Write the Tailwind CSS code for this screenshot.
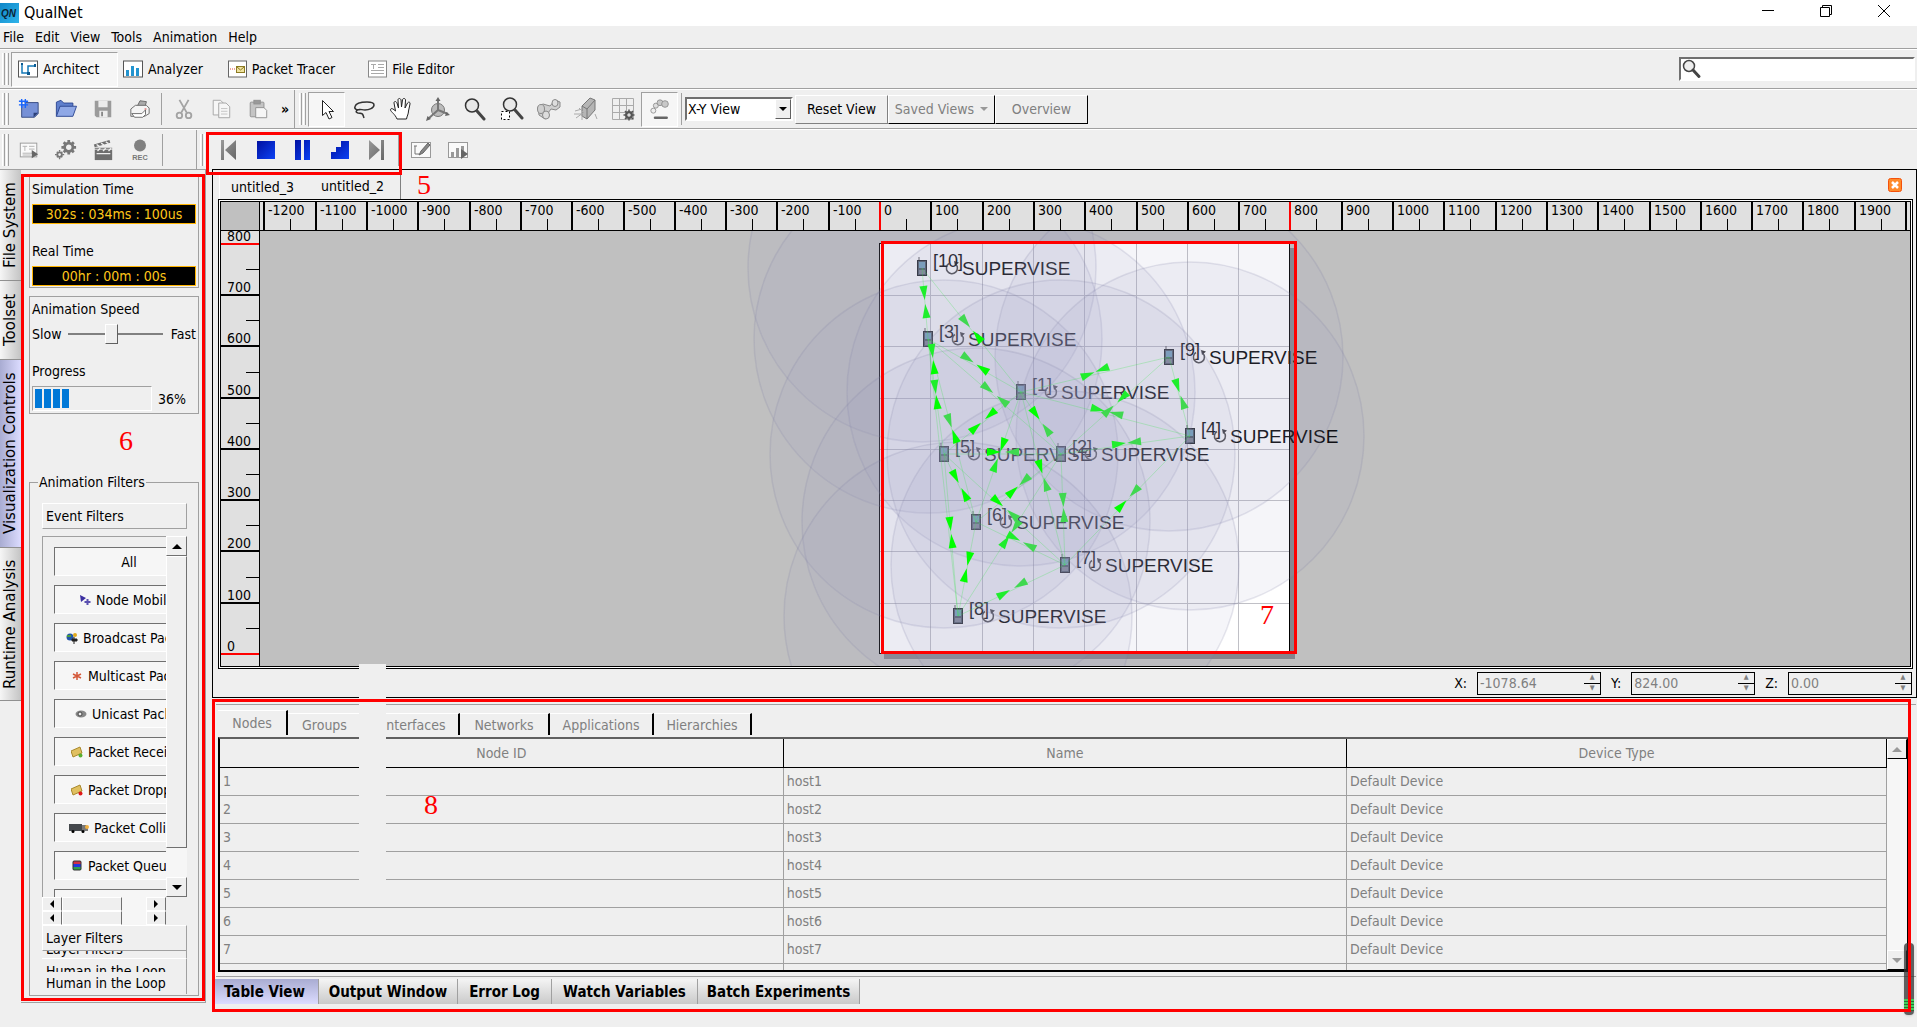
<!DOCTYPE html>
<html lang="en">
<head>
<meta charset="utf-8">
<title>QualNet</title>
<script src="https://cdn.jsdelivr.net/npm/@tailwindcss/browser@4"></script>
</head>
<body class="min-h-screen overflow-x-hidden bg-[#efefef] font-['DejaVu_Sans_Condensed','Noto_Sans',sans-serif] text-[14px] leading-5 text-black">

<!-- title bar -->
<header class="flex h-[26px] items-center bg-white">
  <svg class="h-5 w-[19px]" viewBox="0 0 19 20"><defs><linearGradient id="qn" x1="0" y1="0" x2="1" y2="1"><stop offset="0" stop-color="#0f86c8"/><stop offset="1" stop-color="#2fb4ea"/></linearGradient></defs><rect width="19" height="20" fill="url(#qn)"/><text x="1" y="14" font-size="10" font-weight="700" font-style="italic" font-family="Liberation Sans" fill="#0b2436">QN</text></svg>
  <h1 class="ml-[5px] text-[16px]">QualNet</h1>
  <div class="ml-auto flex gap-11 pr-[26px] pb-1">
    <button aria-label="Minimize"><svg class="h-3.5 w-3.5" viewBox="0 0 14 14" fill="none" stroke="#000"><path d="M1 6.500h12"/></svg></button>
    <button aria-label="Restore"><svg class="h-3.5 w-3.5" viewBox="0 0 14 14" fill="none" stroke="#000"><path d="M1.500 3.500h9v9h-9zM3.500 3V1.500h9v9H11"/></svg></button>
    <button aria-label="Close"><svg class="h-3.5 w-3.5" viewBox="0 0 14 14" fill="none" stroke="#000"><path d="M1 1l12 12M13 1L1 13"/></svg></button>
  </div>
</header>

<nav class="flex h-[23px] items-center gap-[11px] border-b border-[#a0a0a0] px-[3px]">
  <a href="#">File</a><a href="#">Edit</a><a href="#">View</a><a href="#">Tools</a><a href="#">Animation</a><a href="#">Help</a>
</nav>

<!-- perspectives -->
<div class="flex h-10 items-center border-t border-b border-t-white border-b-[#a0a0a0]">
  <div class="ml-0.5 flex h-8 gap-px"><i class="w-[3px] border-r border-l border-l-white border-r-[#a0a0a0]"></i><i class="w-[3px] border-r border-l border-l-white border-r-[#a0a0a0]"></i></div>
  <button class="ml-0.5 flex h-[35px] w-[107px] items-center gap-[5px] border border-[#a0a0a0] border-r-white border-b-white bg-[#f6f6f6] pl-1.5">
    <svg class="h-[18px] w-5" viewBox="0 0 20 18" fill="none"><rect x=".5" y="1" width="19" height="16" fill="#fff" stroke="#555"/><path d="M4 4v9h6V6h7" stroke="#1479b8" stroke-width="1.500"/><path d="M3 3h2v2H3zM9 12h3v3H9zM16 4h2v3h-2z" fill="#0b5a92"/></svg>Architect</button>
  <button class="ml-[5px] flex items-center gap-[5px]">
    <svg class="h-[18px] w-5" viewBox="0 0 20 18"><rect x=".5" y="1" width="19" height="16" fill="#fff" stroke="#555"/><path d="M3 10h3v6H3zM8 6h3v10H8zM13 8h3v8h-3z" fill="#2394cf"/></svg>Analyzer</button>
  <button class="ml-[25px] flex items-center gap-[5px]">
    <svg class="h-[18px] w-[19px]" viewBox="0 0 19 18"><rect x=".5" y="1" width="18" height="16" fill="#fff" stroke="#666"/><path d="M2 9h6" stroke="#e0483a" stroke-dasharray="1 1"/><rect x="8.500" y="6.500" width="8" height="6" fill="#efe3a0" stroke="#8c7a22"/><path d="M9 7l3.500 3L16 7" fill="none" stroke="#8c7a22"/></svg>Packet Tracer</button>
  <button class="ml-[33px] flex items-center gap-[5px]">
    <svg class="h-[18px] w-[19px]" viewBox="0 0 19 18" fill="none" stroke="#a9a9a9"><rect x=".5" y="1" width="18" height="16" fill="#fff" stroke="#888"/><path d="M3 4.500h5M5.500 4v5M10 4.500h6M10 7.500h6M3 10.500h13M3 13.500h13"/></svg>File Editor</button>
  <label class="mr-0.5 ml-auto flex h-6 w-[236px] items-center border-2 border-[#707070] border-r-white border-b-white bg-white">
    <svg class="ml-px h-5 w-5 shrink-0" viewBox="0 0 20 20" fill="none"><circle cx="7" cy="7" r="5.500" fill="#eee" stroke="#444" stroke-width="1.500"/><path d="M11 11l6 6.500" stroke="#444" stroke-width="3" stroke-linecap="round"/></svg>
    <input aria-label="Search" class="w-full bg-transparent outline-none">
  </label>
</div>

<!-- edit and view tools -->
<div class="flex h-10 items-center border-t border-b border-t-white border-b-[#a0a0a0]">
  <div class="ml-0.5 flex h-8 gap-px"><i class="w-[3px] border-r border-l border-l-white border-r-[#a0a0a0]"></i><i class="w-[3px] border-r border-l border-l-white border-r-[#a0a0a0]"></i></div>
  <div class="ml-px flex [&_svg]:h-[22px] [&_svg]:w-[22px] [&>button]:grid [&>button]:w-[37px] [&>button]:place-items-center">
    <button aria-label="New"><svg viewBox="0 0 24 24"><path d="M4 5h18v12l-4 4H4z" fill="#7690d6" stroke="#32467f"/><path d="M22 16h-5v5z" fill="#2b3f78"/><path d="M1 3.500h10M1 7.500h10M4 1v10M8 1v10" stroke="#1a66ff" stroke-width="1.500"/><rect x="5" y="4.500" width="2" height="2" fill="#fff"/></svg></button>
    <button aria-label="Open"><svg class="!w-6" viewBox="0 0 24 24" stroke="#2b4590" fill="#5f7fcc"><path d="M1.500 20V4.500l5-2 3 3h10V9"/><path d="M1.500 20l4-11h18l-4 11z" fill="#8fa8e6"/></svg></button>
    <button aria-label="Save"><svg viewBox="0 0 24 24"><path d="M3 3h18v18H5l-2-2z" fill="#9b9b9b"/><path d="M7 3h10v7H7zM8 14h9v7H8z" fill="#ececec"/><path d="M10 15h2v5h-2z" fill="#888"/></svg></button>
    <button aria-label="Print"><svg viewBox="0 0 24 24" stroke="#666" fill="#f4f4f4"><path d="M9 9l3-6 7 1-2 7z" fill="#aaa"/><path d="M2 12l5-4h12l3 3v6l-5 3H2z"/><path d="M3 17h11l4-4v5l-3 3H6z" fill="#fff"/><path d="M17 12h2" stroke="#c33"/></svg></button>
  </div>
  <i class="mx-[3px] h-8 w-px bg-[#a0a0a0]"></i>
  <div class="flex [&_svg]:h-[22px] [&_svg]:w-[22px] [&>button]:grid [&>button]:w-[37px] [&>button]:place-items-center">
    <button aria-label="Cut"><svg viewBox="0 0 24 24" fill="none" stroke="#a3a3a3" stroke-width="2"><path d="M7 2l8 14M17 2L9 16"/><circle cx="7" cy="19" r="3"/><circle cx="17" cy="19" r="3"/></svg></button>
    <button aria-label="Copy"><svg viewBox="0 0 24 24" fill="#f6f6f6" stroke="#a3a3a3"><path d="M3.500 2.500h8l3 3v13h-11z"/><path d="M9.500 5.500h8l4 4v12h-12z"/><path d="M12 11.500h7M12 14.500h7M12 17.500h7" stroke="#c2c2c2"/></svg></button>
    <button aria-label="Paste"><svg viewBox="0 0 24 24" fill="#c4c4c4" stroke="#8f8f8f"><rect x="3.500" y="4.500" width="15" height="16" rx="1"/><rect x="7.500" y="2.500" width="7" height="4" fill="#999"/><path d="M9.500 10.500h9l3 3v8h-12z" fill="#f6f6f6"/></svg></button>
  </div>
  <button aria-label="More" class="w-[18px] text-center font-bold">»</button>
  <i class="h-full w-px bg-[#a0a0a0]"></i>
  <div class="ml-1 flex h-8 gap-px"><i class="w-[3px] border-r border-l border-l-white border-r-[#a0a0a0]"></i><i class="w-[3px] border-r border-l border-l-white border-r-[#a0a0a0]"></i></div>
  <div class="ml-0.5 flex [&_svg]:h-6 [&_svg]:w-6 [&>button]:grid [&>button]:h-[35px] [&>button]:w-[37px] [&>button]:place-items-center">
    <button aria-label="Select" class="border border-[#a0a0a0] border-r-white border-b-white bg-[#f6f6f6]"><svg viewBox="0 0 24 24"><path d="M7.500 3.500v15l3.500-3 3 6.500 3-1.500-3-6h4.500z" fill="#fff" stroke="#222"/></svg></button>
    <button aria-label="Lasso"><svg viewBox="0 0 24 24" fill="none" stroke="#333" stroke-width="1.500"><path d="M8 12.500C5 13.500 2 12 3 9.500 4 6 9 5 15 5c5 0 7 1 7 3 0 3-5 5-9 5-3 0-4-1-6-.5-3 .5-4 3-1 3.500 3 0 5 .500 5 2.500"/><path d="M11 18l1 3" /></svg></button>
    <button aria-label="Pan"><svg viewBox="0 0 24 24" fill="#fff" stroke="#222"><path d="M8 22C6 17 2 15 1.500 13c0-2 2-2 5 1L5 6c0-2 2-2 3 0l1.500 5L9 3c0-2 2.500-2 3 0l.5 7 1-7c0-2 3-2 3 0l-.5 8L18.500 6c1-1.500 3-1 2.500 1L19.500 14c0 3-1.500 5-2 8z"/></svg></button>
    <button aria-label="Orbit"><svg viewBox="0 0 24 24" fill="#bbb" stroke="#777"><circle cx="12" cy="13" r="6.500"/><path d="M12 13V2M12 13l10 4M12 13L2 22" stroke-width="2"/><path d="M12 0l2.500 4h-5zM24 18l-5 1 1.500-4zM0 24l1.500-5L5 22z" fill="#666" stroke="none"/></svg></button>
    <button aria-label="Zoom"><svg viewBox="0 0 24 24" fill="none"><circle cx="9" cy="8.500" r="6.500" fill="#e8e8e8" stroke="#333" stroke-width="1.500"/><path d="M14 14l7 8" stroke="#444" stroke-width="3" stroke-linecap="round"/></svg></button>
    <button aria-label="Zoom to area"><svg viewBox="0 0 24 24" fill="none"><circle cx="10" cy="7.500" r="6.500" fill="#e8e8e8" stroke="#333" stroke-width="1.500"/><path d="M15 13l7 8" stroke="#444" stroke-width="3" stroke-linecap="round"/><rect x="1.500" y="14.500" width="8" height="8" fill="#fff" stroke="#000" stroke-dasharray="2 2"/></svg></button>
    <button aria-label="Find"><svg class="!w-[26px]" viewBox="0 0 26 24" fill="#cfcfcf" stroke="#8a8a8a"><path d="M2 10l5-3 7 2 5-6 5 2v5l-4 3-5-1-3 4 1 4-4 2-6-4z"/><ellipse cx="5" cy="12" rx="3.500" ry="4.500"/><ellipse cx="19" cy="6" rx="3" ry="3.500" fill="#ddd"/><ellipse cx="10" cy="18" rx="3.500" ry="4" fill="#ddd"/></svg></button>
    <button aria-label="Camera"><svg viewBox="0 0 24 24" fill="#b5b5b5" stroke="#777"><path d="M8 9l8-8 5 2v10l-8 9-5-3z"/><path d="M8 9l5 3 8-9M13 12v10" fill="none"/><path d="M1 14l7-2M2 21l7-5M5 11l5 5M8 23v-7M0 17h8M21 17l2 5" stroke="#aaa"/></svg></button>
    <button aria-label="Grid settings"><svg viewBox="0 0 24 24" fill="none" stroke="#aaa"><path d="M1.500 1.500h21v21h-21zM8.500 2v20M15.500 2v20M2 8.500h20M2 15.500h20" /><circle cx="18" cy="18" r="3" stroke="#555" stroke-width="2"/><path d="M18 12.500v11M12.500 18h11M14 14l8 8M22 14l-8 8" stroke="#555" stroke-width="1.500"/><circle cx="18" cy="18" r="1.500" fill="#efefef"/></svg></button>
    <button aria-label="Trails" class="border border-[#a0a0a0] border-r-white border-b-white bg-[#f6f6f6]"><svg class="!h-5 !w-5" viewBox="0 0 24 24" fill="#c8c8c8" stroke="#8a8a8a"><circle cx="4" cy="14" r="3" fill="#eee"/><circle cx="7" cy="8" r="3" fill="#ddd"/><circle cx="12" cy="4.500" r="3.500"/><circle cx="18" cy="6" r="4"/><path d="M6 22.500h14" stroke="#666" stroke-width="3" stroke-linecap="round"/></svg></button>
  </div>
  <i class="mx-[3px] h-8 w-px bg-[#a0a0a0]"></i>
  <div class="relative h-6 w-[108px] border-2 border-[#707070] border-r-white border-b-white bg-white">
    <select aria-label="View" class="h-full w-full appearance-none bg-transparent pl-px text-[14px] outline-none"><option>X-Y View</option></select>
    <span class="pointer-events-none absolute top-0 right-0 grid h-5 w-4 place-items-center border border-white border-r-[#606060] border-b-[#606060] bg-[#efefef]"><svg class="h-1 w-2" viewBox="0 0 8 4"><path d="M0 0h8L4 4z"/></svg></span>
  </div>
  <button class="ml-0.5 h-[29px] w-[93px] border border-white border-r-[#808080] border-b-[#808080]">Reset View</button>
  <button class="flex h-[29px] w-[107px] items-center justify-center gap-1.5 border border-white border-r-black border-b-black text-[#808080]">Saved Views <svg class="h-1 w-2" viewBox="0 0 8 4"><path d="M0 0h8L4 4z" fill="#999"/></svg></button>
  <button class="h-[29px] w-[93px] border border-white border-r-black border-b-black text-[#808080]">Overview</button>
</div>

<!-- run and playback tools -->
<div class="relative flex h-10 items-center border-t border-white">
  <div class="ml-0.5 flex h-8 gap-px"><i class="w-[3px] border-r border-l border-l-white border-r-[#a0a0a0]"></i><i class="w-[3px] border-r border-l border-l-white border-r-[#a0a0a0]"></i></div>
  <div class="ml-px flex [&_svg]:h-[22px] [&_svg]:w-[22px] [&>button]:grid [&>button]:w-[37px] [&>button]:place-items-center">
    <button aria-label="Run script"><svg viewBox="0 0 24 24" fill="none" stroke="#b0b0b0"><rect x="2.500" y="4.500" width="18" height="15" fill="#fafafa" stroke="#999"/><path d="M5 8h5M7.500 8v5M12 8h6M12 11h6M5 15.500h11M5 17.500h9"/><path d="M15 12l7 4.500-7 4.500z" fill="#666" stroke="none"/></svg></button>
    <button aria-label="Run settings"><svg viewBox="0 0 24 24" fill="none" stroke="#777"><circle cx="15" cy="9" r="4.500" stroke-width="3"/><path d="M15 1v4M15 13v4M7 9h4M19 9h4M9.500 3.500l3 3M17.500 11.500l3 3M20.500 3.500l-3 3M12.500 11.500l-3 3" stroke-width="3"/><circle cx="5" cy="17" r="2.500" stroke-width="2"/><path d="M5 12v2M5 20v2M0 17h2M8 17h2M2 14l1 1M7 19l1 1M8 14l-1 1M3 19l-1 1" stroke-width="1.500"/></svg></button>
    <button aria-label="Movie"><svg viewBox="0 0 24 24" fill="#6e6e6e"><path d="M3 12h19v11H3z"/><path d="M2 6l17-5 1 3L3 9z"/><path d="M3 9.500h19v2H3z" fill="#888"/><path d="M5 6l3 2M10 4.500l3 2M15 3l3 2M5 16h15M6 13l3-3M12 13l3-3M18 13l3-3" stroke="#efefef" stroke-width="1.500"/></svg></button>
    <button aria-label="Record"><svg viewBox="0 0 24 24"><circle cx="12" cy="7" r="6.500" fill="#808080"/><text x="12" y="23" text-anchor="middle" font-size="8" font-weight="700" font-family="Liberation Sans" fill="#777">REC</text></svg></button>
  </div>
  <i class="ml-1 h-8 w-px bg-[#a0a0a0]"></i>
  <i class="ml-[33px] h-full w-px bg-[#a0a0a0]"></i>
  <div class="ml-[3px] flex h-8 gap-px"><i class="w-[3px] border-r border-l border-l-white border-r-[#a0a0a0]"></i><i class="w-[3px] border-r border-l border-l-white border-r-[#a0a0a0]"></i></div>
  <svg width="0" height="0" class="absolute"><defs><linearGradient id="bl" x1="0" y1="0" x2="1" y2="1"><stop offset="0" stop-color="#0010a0"/><stop offset="1" stop-color="#0c42f4"/></linearGradient><linearGradient id="gr" x1="0" y1="0" x2="1" y2="1"><stop offset="0" stop-color="#999"/><stop offset="1" stop-color="#666"/></linearGradient></defs></svg>
  <div class="ml-[3px] flex [&_svg]:h-6 [&_svg]:w-6 [&>button]:grid [&>button]:w-[37px] [&>button]:place-items-center">
    <button aria-label="Rewind"><svg viewBox="0 0 24 24" fill="url(#gr)"><path d="M4 2h3v20H4zM19 2v20L8 12z"/></svg></button>
    <button aria-label="Stop"><svg viewBox="0 0 24 24"><rect x="3" y="3" width="18" height="18" fill="url(#bl)"/></svg></button>
    <button aria-label="Pause"><svg viewBox="0 0 24 24" fill="url(#bl)"><path d="M4 2h6v20H4zM13 2h6v20h-6z"/></svg></button>
    <button aria-label="Step"><svg viewBox="0 0 24 24" fill="url(#bl)"><path d="M21 3v18H3v-7h5V9h5V3z"/></svg></button>
    <button aria-label="Forward"><svg viewBox="0 0 24 24" fill="url(#gr)"><path d="M16 2h3v20h-3zM4 2v20l11-10z"/></svg></button>
  </div>
  <i class="mx-[3px] h-8 w-px bg-[#a0a0a0]"></i>
  <div class="flex [&_svg]:h-6 [&_svg]:w-6 [&>button]:grid [&>button]:w-[37px] [&>button]:place-items-center">
    <button aria-label="Edit run"><svg viewBox="0 0 24 24" fill="none" stroke="#999"><rect x="2.500" y="4.500" width="19" height="15" fill="#fafafa"/><path d="M6 8v8h4M5 8h3" stroke="#777"/><path d="M10 17l2-4 7-8 2 2-7 8z" fill="#888" stroke="#666"/></svg></button>
    <button aria-label="Run analysis"><svg viewBox="0 0 24 24"><rect x="2.500" y="4.500" width="19" height="15" fill="#fafafa" stroke="#999"/><path d="M5 14h3v5H5zM10 10h3v9h-3zM15 8h3v11h-3z" fill="#999"/><path d="M15 11l7 5-7 5z" fill="#666"/></svg></button>
  </div>
  <div class="pointer-events-none absolute top-0.5 left-[206px] z-20 h-[43px] w-[196px] border-3 border-[#ff0000]"></div>
</div>

<main class="flex">
  <!-- left dock -->
  <aside class="flex w-[206px] shrink-0 border-t border-[#a0a0a0]">
    <div class="flex w-[21px] flex-col font-['DejaVu_Sans',sans-serif] text-[15px] [&>button]:rotate-180 [&>button]:border-t [&>button]:border-[#909090] [&>button]:bg-linear-to-r [&>button]:from-[#c4c4c4] [&>button]:to-[#f6f6f6] [&>button]:leading-[21px] [&>button]:[writing-mode:vertical-rl]">
      <button class="h-[111px]">File System</button>
      <button class="h-[79px]">Toolset</button>
      <button class="h-[188px] !bg-linear-to-r !from-[#dcdcff] !to-[#a9acd2]">Visualization Controls</button>
      <button class="h-[153px]">Runtime Analysis</button>
    </div>
    <section class="relative h-[833px] flex-1 border-r border-b border-[#a0a0a0] pt-1.5 pr-1.5 pl-2">
      <div class="h-28 border border-[#a0a0a0] px-0.5 pt-0.5">
        <p>Simulation Time</p>
        <output class="mt-[5px] block h-5 border border-[#ffb400] bg-black text-center leading-[18px] text-[#ffc61a]">302s : 034ms : 100us</output>
        <p class="mt-[17px]">Real Time</p>
        <output class="mt-[5px] block h-5 border border-[#ffb400] bg-black text-center leading-[18px] text-[#ffc61a]">00hr : 00m : 00s</output>
      </div>
      <div class="mt-2 h-[118px] border border-[#a0a0a0] px-0.5 pt-0.5">
        <label for="speed">Animation Speed</label>
        <div class="mt-[5px] flex items-center"><span>Slow</span>
          <input id="speed" type="range" value="46" class="mr-2 ml-1.5 h-5 w-0 flex-1 appearance-none bg-[linear-gradient(#808080,#808080)] bg-[length:100%_2px] bg-center bg-no-repeat [&::-webkit-slider-thumb]:h-5 [&::-webkit-slider-thumb]:w-[13px] [&::-webkit-slider-thumb]:appearance-none [&::-webkit-slider-thumb]:border [&::-webkit-slider-thumb]:border-white [&::-webkit-slider-thumb]:border-r-[#606060] [&::-webkit-slider-thumb]:border-b-[#606060] [&::-webkit-slider-thumb]:bg-[#efefef]"><span>Fast</span></div>
        <p class="mt-[17px]">Progress</p>
        <div class="mt-[5px] flex items-center">
          <div class="flex h-[25px] w-[120px] gap-0.5 border border-[#a0a0a0] border-r-white border-b-white p-0.5"><i class="w-[7px] bg-[#0078d7]"></i><i class="w-[7px] bg-[#0078d7]"></i><i class="w-[7px] bg-[#0078d7]"></i><i class="w-[7px] bg-[#0078d7]"></i></div>
          <span class="ml-1.5">36%</span>
        </div>
      </div>
      <p class="flex h-[58px] items-center justify-center pb-1 pl-6 font-['Liberation_Serif',serif] text-[28px] text-[#ff0000]">6</p>
      <fieldset class="h-[524px] border border-[#a0a0a0] pr-[11px] pl-3">
        <legend class="-ml-1 px-px">Animation Filters</legend>
        <button class="mt-[11px] block h-[26px] w-full border border-white border-r-[#a0a0a0] border-b-[#a0a0a0] pl-[3px] text-left">Event Filters</button>
        <div class="mt-[7px] flex h-[361px]">
          <div class="w-0 flex-1 overflow-hidden border-t border-l border-[#a0a0a0] pt-2.5 pl-[11px] whitespace-nowrap [&_svg]:h-3 [&_svg]:w-3 [&_svg]:shrink-0 [&>button]:mb-[9px] [&>button]:flex [&>button]:h-[29px] [&>button]:w-[150px] [&>button]:items-center [&>button]:gap-[5px] [&>button]:border [&>button]:border-[#707070] [&>button]:border-b-white [&>button]:bg-[#f6f6f6]">
            <button class="justify-center">All</button>
            <button class="pl-6"><svg viewBox="0 0 12 12"><path d="M1 1l6 3-5 4z" fill="#3b2fa0"/><path d="M8.500 5v6M5.500 8h6" stroke="#5a50b0" stroke-width="2"/></svg>Node Mobility</button>
            <button class="pl-[11px]"><svg viewBox="0 0 12 12"><circle cx="4" cy="5" r="3.500" fill="#2255a8"/><path d="M1 4h4" stroke="#4a9c3c" stroke-width="2"/><circle cx="9" cy="3" r="2" fill="#e0a81c"/><path d="M6 7h5v2H6zM8 5v7" stroke="#222" fill="#222"/></svg>Broadcast Packet</button>
            <button class="pl-4"><svg viewBox="0 0 12 12" stroke="#d4583a" stroke-width="1.500"><path d="M6 2v8M2 4l8 4M10 4L2 8"/></svg>Multicast Packet</button>
            <button class="pl-5"><svg viewBox="0 0 12 12"><ellipse cx="6" cy="6" rx="5.500" ry="3.500" fill="#888"/><circle cx="5" cy="6" r="2" fill="#eee" stroke="#444"/></svg>Unicast Packet</button>
            <button class="pl-4"><svg viewBox="0 0 12 12"><path d="M0 5l9-4 2 6-9 4z" fill="#e0c060" stroke="#a8882c"/><circle cx="9.500" cy="9.500" r="2" fill="#58b030"/></svg>Packet Received</button>
            <button class="pl-4"><svg viewBox="0 0 12 12"><path d="M0 5l9-4 2 6-9 4z" fill="#e0c060" stroke="#a8882c"/><circle cx="9.500" cy="9.500" r="2" fill="#e01818"/></svg>Packet Dropped</button>
            <button class="pl-3.5"><svg class="!w-5" viewBox="0 0 20 12"><path d="M0 2h13v7H0z" fill="#44484c"/><path d="M13 3h4l2 3v3h-6z" fill="#777"/><circle cx="18" cy="5" r="2" fill="#f0b040"/><circle cx="4" cy="9.500" r="1.500"/><circle cx="14" cy="9.500" r="1.500"/></svg>Packet Collision</button>
            <button class="pl-4"><svg viewBox="0 0 12 12"><rect x="2" y="1" width="8" height="3" fill="#d03048"/><rect x="2" y="4" width="8" height="3" fill="#2438e0"/><rect x="2" y="7" width="8" height="3" fill="#30a050"/><rect x="2" y="1" width="8" height="9" fill="none" stroke="#333" rx="1"/></svg>Packet Queued</button>
            <button aria-label="More filters"></button>
          </div>
          <div class="flex w-[21px] flex-col bg-[#f6f6f6]">
            <button aria-label="Scroll up" class="grid h-5 place-items-center border border-white border-r-[#707070] border-b-[#707070] bg-[#efefef]"><svg class="h-[5px] w-2.5" viewBox="0 0 10 5"><path d="M0 5h10L5 0z"/></svg></button>
            <div class="h-[292px] border border-white border-r-[#707070] border-b-[#707070] bg-[#efefef]"></div>
            <button aria-label="Scroll down" class="mt-auto grid h-5 place-items-center border border-white border-r-[#707070] border-b-[#707070] bg-[#efefef]"><svg class="h-[5px] w-2.5" viewBox="0 0 10 5"><path d="M0 0h10L5 5z"/></svg></button>
          </div>
        </div>
        <div class="mr-[21px] flex h-3.5 justify-between bg-[#f6f6f6]"><button aria-label="Scroll left" class="grid w-5 place-items-center border border-white border-r-[#707070] bg-[#efefef]"><svg class="h-2 w-1.5" viewBox="0 0 5 10"><path d="M5 0v10L0 5z"/></svg></button><i class="mr-6 flex-1 border border-white border-r-[#707070] bg-[#efefef]"></i><button aria-label="Scroll right" class="grid w-5 place-items-center border border-white border-r-[#707070] bg-[#efefef]"><svg class="h-2 w-1.5" viewBox="0 0 5 10"><path d="M0 0v10l5-5z"/></svg></button></div>
        <div class="mr-[21px] flex h-3.5 justify-between bg-[#f6f6f6]"><button aria-label="Scroll left" class="grid w-5 place-items-center border border-white border-r-[#707070] bg-[#efefef]"><svg class="h-2 w-1.5" viewBox="0 0 5 10"><path d="M5 0v10L0 5z"/></svg></button><i class="mr-6 flex-1 border border-white border-r-[#707070] bg-[#efefef]"></i><button aria-label="Scroll right" class="grid w-5 place-items-center border border-white border-r-[#707070] bg-[#efefef]"><svg class="h-2 w-1.5" viewBox="0 0 5 10"><path d="M0 0v10l5-5z"/></svg></button></div>
        <button class="block h-[26px] w-full border border-white border-r-[#a0a0a0] border-b-[#a0a0a0] pl-[3px] text-left">Layer Filters</button>
        <div class="flex h-[7px] items-end overflow-hidden border-r border-[#a0a0a0] pl-1 leading-[18px]">Layer Filters</div>
        <div class="h-3.5 overflow-hidden border-t border-r border-white border-r-[#a0a0a0] pt-0.5 pl-1">Human in the Loop</div>
        <button class="block h-[22px] w-full border-r border-[#a0a0a0] pl-1 text-left">Human in the Loop</button>
      </fieldset>
      <div class="pointer-events-none absolute top-1 right-0 bottom-px left-0 border-3 border-[#ff0000]"></div>
    </section>
  </aside>

  <div class="relative ml-1.5 min-w-0 flex-1">
    <!-- scenario view -->
    <section class="border border-black">
      <div class="flex h-[29px] items-end">
        <button class="ml-1.5 h-[26px] w-[90px] border-t border-l border-white pr-1">untitled_3</button>
        <button class="h-[27px] w-[92px] border-t border-r border-white border-r-[#808080] pr-1">untitled_2</button>
        <span class="ml-4 self-center font-['Liberation_Serif',serif] text-[28px] text-[#ff0000]">5</span>
        <button aria-label="Close scenario" class="mr-3.5 ml-auto self-center"><svg class="h-3.5 w-3.5" viewBox="0 0 14 14"><rect x=".5" y=".5" width="13" height="13" rx="2" fill="#ff8a2a" stroke="#f4510b"/><path d="M4 4l6 6M10 4l-6 6" stroke="#fff" stroke-width="2.500"/></svg></button>
      </div>
      <div class="mr-[3px] ml-[5px] border-3 border-double border-black bg-white">
        <div class="flex h-[29px] border-b border-black">
          <div class="w-[39px] shrink-0 border-r border-black bg-[#c0c0c0]"></div>
          <svg id="hruler" class="block h-7 min-w-0 flex-1 bg-[#e0e0e0]"></svg>
        </div>
        <div class="flex">
          <svg id="vruler" class="block h-[435px] w-[39px] shrink-0 border-r border-black bg-[#e0e0e0]"></svg>
          <svg id="scene" class="block h-[435px] min-w-0 flex-1 bg-[#c0c0c0] font-['Liberation_Sans',sans-serif]"></svg>
        </div>
      </div>
      <div class="flex h-7 items-center justify-end pr-1">
        <label for="cx">X:</label>
        <div class="mr-2.5 ml-2.5 flex h-[23px] w-[124px] border border-black bg-[#efefef]"><input id="cx" value="-1078.64" class="w-0 flex-1 pl-0.5 text-[#808080] outline-none"><span class="grid w-4 text-center text-[7px] leading-[9px] text-[#808080]"><button aria-label="Increase X" class="border-b border-black">▲</button><button aria-label="Decrease X">▼</button></span></div>
        <label for="cy">Y:</label>
        <div class="mr-2.5 ml-2.5 flex h-[23px] w-[124px] border border-black bg-[#efefef]"><input id="cy" value="824.00" class="w-0 flex-1 pl-0.5 text-[#808080] outline-none"><span class="grid w-4 text-center text-[7px] leading-[9px] text-[#808080]"><button aria-label="Increase Y" class="border-b border-black">▲</button><button aria-label="Decrease Y">▼</button></span></div>
        <label for="cz">Z:</label>
        <div class="ml-2.5 flex h-[23px] w-[124px] border border-black bg-[#efefef]"><input id="cz" value="0.00" class="w-0 flex-1 pl-0.5 text-[#808080] outline-none"><span class="grid w-4 text-center text-[7px] leading-[9px] text-[#808080]"><button aria-label="Increase Z" class="border-b border-black">▲</button><button aria-label="Decrease Z">▼</button></span></div>
      </div>
    </section>

    <!-- table dock -->
    <section class="relative h-[314px] pt-1.5 pl-1 text-[#808080]">
      <div class="mr-px border-t border-b border-[#a0a0a0] pt-[5px] pb-1">
        <div class="flex h-[25px] items-end pl-0.5 [text-shadow:1px_1px_#fff]">
          <button class="h-[25px] w-[70px] border-t border-r-2 border-white border-r-black">Nodes</button>
          <button class="h-[22px] w-[86px] border-t border-r border-white border-r-black pr-3">Groups</button>
          <button class="h-[22px] w-[86px] border-t border-r-2 border-white border-r-black pr-1">Interfaces</button>
          <button class="h-[22px] w-[90px] border-t border-r-2 border-white border-r-black">Networks</button>
          <button class="h-[22px] w-[104px] border-t border-r-2 border-white border-r-black">Applications</button>
          <button class="h-[22px] w-[98px] border-t border-r-2 border-white border-r-black">Hierarchies</button>
        </div>
        <div class="mt-0.5 mr-[7px] ml-0.5 flex h-[235px] overflow-hidden border-2 border-black border-t-[#606060]">
          <div class="h-full min-w-0 flex-1 overflow-hidden">
            <table class="w-full table-fixed border-collapse text-left">
              <colgroup><col class="w-[33.8%]"><col class="w-[33.8%]"><col></colgroup>
              <thead class="[&_th]:h-7 [&_th]:border-r [&_th]:border-b [&_th]:border-black [&_th]:text-center [&_th]:font-normal"><tr><th>Node ID</th><th>Name</th><th>Device Type</th></tr></thead>
              <tbody id="rows" class="[&_td]:h-7 [&_td]:border-r [&_td]:border-b [&_td]:border-[#a0a0a0] [&_td]:px-[3px]"></tbody>
            </table>
          </div>
          <div class="flex w-5 flex-col justify-between bg-[#f6f6f6]">
            <button aria-label="Scroll up" class="grid h-5 place-items-center border border-white border-r-black border-b-black bg-[#efefef]"><svg class="h-[5px] w-2.5" viewBox="0 0 10 5"><path d="M0 5h10L5 0z" fill="#999"/></svg></button>
            <button aria-label="Scroll down" class="grid h-5 place-items-center border border-white border-r-black border-b-black bg-[#efefef]"><svg class="h-[5px] w-2.5" viewBox="0 0 10 5"><path d="M0 0h10L5 5z" fill="#999"/></svg></button>
          </div>
        </div>
      </div>
      <div class="mt-0.5 -ml-px flex h-[25px] text-[15px] font-bold text-black [&>button]:border-r [&>button]:border-[#a0a0a0] [&>button]:bg-linear-to-b [&>button]:from-[#f4f4f4] [&>button]:to-[#cacaca]">
        <button class="w-[104px] !bg-linear-to-b !from-[#a9acd2] !to-[#dcdcff] pr-1">Table View</button>
        <button class="w-[139px]">Output Window</button>
        <button class="w-[94px]">Error Log</button>
        <button class="w-[146px]">Watch Variables</button>
        <button class="w-[162px]">Batch Experiments</button>
      </div>
    </section>

    <div class="pointer-events-none absolute top-[495px] left-[147px] h-[222px] w-[27px] bg-[#efefef]"></div>
    <div class="pointer-events-none absolute top-[774px] right-[3px] flex h-[72px] w-2.5 flex-col justify-end rounded-sm bg-[#303030]/75 pb-1 shadow">
      <i class="h-3 bg-[repeating-linear-gradient(#3ecf5c_0_2px,#2b6b38_2px_3px)]"></i>
    </div>
    <div class="pointer-events-none absolute top-[530px] right-1.5 bottom-0 left-0 border-3 border-[#ff0000]"></div>
    <span class="pointer-events-none absolute top-[626px] left-[212px] font-['Liberation_Serif',serif] text-[28px] text-[#ff0000]">8</span>
  </div>
</main>

<script>
const NS = 'http://www.w3.org/2000/svg';
function el(parent, tag, attrs, text) {
  const e = document.createElementNS(NS, tag);
  for (const k in attrs) e.setAttribute(k, attrs[k]);
  if (text !== undefined) e.textContent = text;
  parent.appendChild(e);
  return e;
}
const STEP = 51.3;       // pixels per 100 m
const X0 = 620, Y0 = 423; // scenario origin on the canvas

// rulers
const hr = document.getElementById('hruler');
for (let i = -12; i <= 20; i++) {
  const x = Math.round(X0 + i * STEP);
  el(hr, 'rect', {x: x - 1, y: 0, width: 2, height: 28, fill: i === 0 || i === 8 ? '#ff0000' : '#000'});
  if (i < 20) el(hr, 'rect', {x: Math.round(x + STEP / 2), y: 17, width: 1, height: 11});
  if (i < 20) el(hr, 'text', {x: x + 4, y: 13, 'font-size': 14}, i * 100);
}
const vr = document.getElementById('vruler');
for (let i = 0; i <= 8; i++) {
  const y = Math.round(Y0 - i * STEP);
  el(vr, 'rect', {x: 0, y: y - 1, width: 39, height: 2, fill: i % 8 ? '#000' : '#ff0000'});
  if (i < 8) el(vr, 'rect', {x: 25, y: Math.round(y - STEP / 2), width: 14, height: 1});
  el(vr, 'text', {x: 6, y: y - 3, 'font-size': 14}, i * 100);
}

// terrain
const sc = document.getElementById('scene');
el(sc, 'rect', {x: 624, y: 17, width: 411, height: 411, fill: '#85858c'});
el(sc, 'rect', {x: 619.5, y: 12.5, width: 410, height: 410, fill: '#fff', stroke: '#000'});
for (let i = 1; i < 8; i++) {
  const x = Math.round(X0 + i * STEP) - 1, y = Math.round(Y0 - i * STEP);
  el(sc, 'path', {d: `M${x}.5 13V422M620 ${y}.5H1029`, stroke: '#c0c0c6'});
}

const nodes = [[10,662,37],[3,668,108],[1,761,161],[9,909,126],[4,930,205],[5,684,223],[2,801,223],[6,716,291],[7,805,334],[8,698,385]];
for (const [id, x, y] of nodes) {
  const g = el(sc, 'g', {transform: `translate(${x} ${y})`});
  el(g, 'path', {d: 'M-3 -7V-11', stroke: '#555'});
  el(g, 'rect', {x: -4.5, y: -7.5, width: 9, height: 15, fill: '#4a5660', stroke: '#15181c'});
  el(g, 'rect', {x: -3, y: -6, width: 6, height: 6, fill: '#6fa0b8'});
  el(g, 'path', {d: 'M-3 3H3M-3 5H3', stroke: '#aab'});
  el(g, 'path', {d: 'M-3 -4.500A5.500 5.500 0 1 0 3.500 -4', transform: 'translate(30 0)', fill: 'none', stroke: '#444', 'stroke-width': 1.5});
  el(g, 'path', {d: 'M32 -7L37 -5.500L33 -2z', fill: '#333'});
  el(g, 'text', {x: 11, y: -1, 'font-size': 18}, `[${id}]`);
  el(g, 'text', {x: 40, y: 7, 'font-size': 19}, 'SUPERVISE');
}

// radio ranges
for (const [, x, y] of nodes)
  el(sc, 'circle', {cx: x, cy: y, r: 174, fill: 'rgba(160,160,200,.1)', stroke: 'rgba(120,120,160,.18)', 'stroke-width': 1.5});

// links
const at = Object.fromEntries(nodes.map(n => [n[0], n]));
for (const [a, b] of [[10,3],[10,1],[3,1],[3,2],[3,8],[3,5],[3,6],[1,9],[9,2],[9,4],[1,4],[1,5],[1,2],[2,4],[1,6],[5,2],[5,6],[2,6],[5,7],[1,7],[2,7],[4,7],[5,8],[6,7],[2,8],[6,8],[7,8]])
  el(sc, 'path', {d: `M${at[a][1]} ${at[a][2]}L${at[b][1]} ${at[b][2]}`, stroke: 'rgba(60,230,80,.28)'});

// packets: [x1, y1, x2, y2, colour 1, colour 2]
const P = '#00ff00', Q = '#1fee2c', R = '#40d850';
const packets = [
  [664,61,666,81,Q,Q],[705,90,718,106,R,P],[707,127,723,138,R,P],[727,157,743,170,R,R],[672,119,674,137,Q,P],
  [675,155,677,172,Q,P],[689,189,695,206,R,P],[827,144,843,138,Q,Q],[863,166,848,180,Q,R],[917,154,923,172,Q,R],
  [837,178,857,183,Q,R],[731,183,715,197,P,P],[775,182,787,199,P,R],[858,213,875,211,Q,R],[743,213,735,235,P,Q],
  [733,221,753,221,P,R],[695,245,705,264,P,P],[765,249,752,261,R,P],[737,270,753,284,P,R],[780,235,786,254,P,R],
  [803,268,804,285,R,R],[875,260,861,275,R,P],[690,292,692,311,P,P],[753,306,770,315,Q,R],[756,295,745,311,R,Q],
  [709,327,705,345,P,P],[743,363,761,353,Q,R]];
function head(x, y, ux, uy, fill) {
  const f = v => v.toFixed(1);
  el(sc, 'path', {fill, d: `M${f(x + ux * 8)} ${f(y + uy * 8)}L${f(x - ux * 6 - uy * 4)} ${f(y - uy * 6 + ux * 4)}L${f(x - ux * 6 + uy * 4)} ${f(y - uy * 6 - ux * 4)}z`});
}
for (const [a, b, c, d, m, n] of packets) {
  const l = Math.hypot(c - a, d - b), ux = (c - a) / l, uy = (d - b) / l;
  head(a, b, ux, uy, m);
  head(c, d, -ux, -uy, n);
}
el(sc, 'rect', {x: 622.5, y: 11.5, width: 413, height: 410, fill: 'none', stroke: '#ff0000', 'stroke-width': 3});
el(sc, 'text', {x: 1000, y: 393, 'font-size': 28, 'font-family': 'Liberation Serif', fill: '#ff0000'}, '7');

const tb = document.getElementById('rows');
for (let i = 1; i <= 7; i++)
  tb.insertAdjacentHTML('beforeend', `<tr><td>${i}</td><td>host${i}</td><td>Default Device</td></tr>`);
tb.insertAdjacentHTML('beforeend', '<tr><td></td><td></td><td></td></tr>');
</script>
</body>
</html>
